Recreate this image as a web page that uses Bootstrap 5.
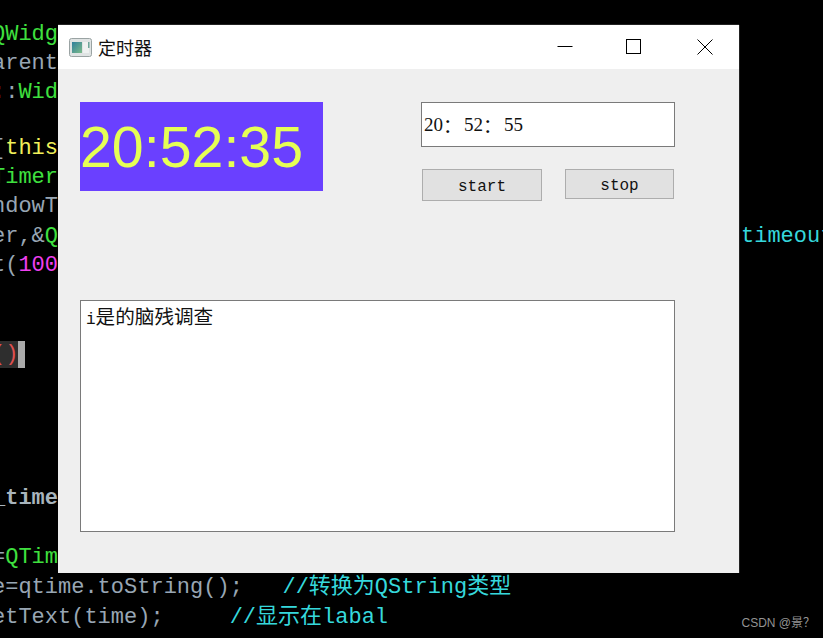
<!DOCTYPE html>
<html lang="zh">
<head>
<meta charset="utf-8">
<title>定时器</title>
<link href="https://cdn.jsdelivr.net/npm/bootstrap@5.3.0/dist/css/bootstrap.min.css" rel="stylesheet">
<style>
html,body{height:100%;margin:0;background:#000;overflow:hidden}
.desk{width:823px;height:638px;background:#000;overflow:hidden;position:relative}
.code{margin:0;padding:20px 0 0 0;margin-left:-8px;font:22px/29.2px "Liberation Mono","Noto Sans CJK SC",monospace;color:#98a6b4;white-space:pre;overflow:visible}
.ln{height:29.2px;display:block}
.ln.s1{height:26.5px}.ln.s2{height:32px}.ln.s3{height:26.2px}.ln.s4{height:30px}
.gr{color:#3fe03f}.ye{color:#f0f05a}.ma{color:#f040f0}.cy{color:#36d8dc}.re{color:#e05050}.bo{font-weight:700;color:#a8b4bc}
.sel{background:#2e2e2e;display:inline-block;height:27px;line-height:27px;vertical-align:top}
.cur{background:#aaa;display:inline-block;width:7px;height:27px;vertical-align:top}
.hid{display:inline-block;width:683px}
.wm{position:absolute;right:8px;top:616px;font:12px/14px "Liberation Sans","Noto Sans CJK SC",sans-serif;color:#939393}
.win{position:absolute;left:58px;top:25px;width:681px;height:548px;background:#efefef;box-shadow:0 -1px 0 #222,1px 0 0 #222}
.tbar{height:44px;background:#fff;padding-left:11px;gap:6px;color:#111}
.ttl{font:18px/24px "Noto Sans CJK SC",sans-serif}
.ctl{height:44px}
.c1{width:64px}.c2{width:74px}.c3{width:68px}
.pane{padding:33px 64px 41px 22px}
.clock{width:243px;height:89px;background:#6a40ff;color:#e6ff55;font:57.3px/91px "Liberation Sans",sans-serif;white-space:nowrap;overflow:hidden}
.side{margin-left:98px;width:254px}
.lcd.form-control{height:45px;border:1px solid #7a7a7a;border-radius:0;background:#fff;padding:0 2px;color:#111;font:19px/43px "Liberation Serif","Noto Sans CJK SC",serif;box-shadow:none}
.wide{letter-spacing:2px;vertical-align:-1.5px}
.qbtn.btn{background:#e1e1e1;border:1px solid #adadad;border-radius:0;padding:0;color:#111;font:16px/30px "Liberation Mono",monospace}
.qbtn.b1{width:120px;height:32px;margin-left:1px;padding-top:2px}
.qbtn.b2{width:109px;height:30px;margin-right:1px;padding-top:1px}
.rowb{margin-top:22px}
.memo.form-control{margin-top:99px;height:232px;width:595px;border:1px solid #7a7a7a;border-radius:0;background:#fff;padding:2px 5px;color:#111;font:19.6px/26px "Noto Sans CJK SC",serif;box-shadow:none}
.lat{font:16px/26px "Liberation Mono",monospace}
</style>
</head>
<body>
<div class="desk">
<pre class="code"><span class="ln gr">QWidget</span><span class="ln">arent</span><span class="ln"><span class="re">:</span>:<span class="gr">Widget</span></span><span class="ln s1"> </span><span class="ln">[<span class="ye">this</span></span><span class="ln gr">Timer</span><span class="ln">ndowT</span><span class="ln">er,&amp;<span class="gr">Q</span><span class="hid"></span><span class="cy">timeout</span></span><span class="ln">t(<span class="ma">1000</span></span><span class="ln"> </span><span class="ln s2"> </span><span class="ln"><span class="sel re">()</span><span class="cur"></span></span><span class="ln"> </span><span class="ln s3"> </span><span class="ln"> </span><span class="ln"> </span><span class="ln bo">_time</span><span class="ln"> </span><span class="ln s4">=<span class="gr">QTime</span></span><span class="ln s4">e=qtime.toString();   <span class="cy">//转换为QString类型</span></span><span class="ln s4">etText(time);     <span class="cy">//显示在labal</span></span></pre>
<div class="wm">CSDN @景？</div>

<div class="win">
  <div class="tbar d-flex align-items-center">
    <svg width="23" height="19" viewBox="0 0 23 19" aria-hidden="true">
      <defs><linearGradient id="g" x1="0" y1="0" x2="1" y2="1"><stop offset="0" stop-color="#2f7f9c"/><stop offset="1" stop-color="#7dbb8a"/></linearGradient></defs>
      <rect x=".5" y=".5" width="22" height="18" rx="2" fill="#dfe3e3" stroke="#9aa3a3"/>
      <rect x="3" y="4" width="10" height="11" fill="url(#g)"/>
      <rect x="14" y="4" width="6" height="11" fill="#eef1f0"/>
      <rect x="19" y="4" width="1.5" height="6" fill="#6fa59a"/>
    </svg>
    <span class="ttl flex-grow-1">定时器</span>
    <div class="d-flex">
      <div class="ctl c1 d-flex align-items-center justify-content-center"><svg width="16" height="16" viewBox="0 0 16 16"><path d="M.5 7.5H15.5" stroke="#000"/></svg></div>
      <div class="ctl c2 d-flex align-items-center justify-content-center"><svg width="16" height="16" viewBox="0 0 16 16"><rect x=".5" y=".5" width="14" height="14" fill="none" stroke="#000"/></svg></div>
      <div class="ctl c3 d-flex align-items-center justify-content-center"><svg width="16" height="16" viewBox="0 0 16 16"><path d="M.5.5L15.5 15.5M15.5.5L.5 15.5" stroke="#000"/></svg></div>
    </div>
  </div>
  <div class="pane">
    <div class="d-flex align-items-start">
      <div class="clock">20:52:35</div>
      <div class="side">
        <div class="lcd form-control">20<span class="wide">：</span>52<span class="wide">：</span>55</div>
        <div class="rowb d-flex justify-content-between align-items-start">
          <button type="button" class="qbtn btn b1">start</button>
          <button type="button" class="qbtn btn b2">stop</button>
        </div>
      </div>
    </div>
    <div class="memo form-control"><span class="lat">i</span>是的脑残调查</div>
  </div>
</div>
</div>
</body>
</html>
